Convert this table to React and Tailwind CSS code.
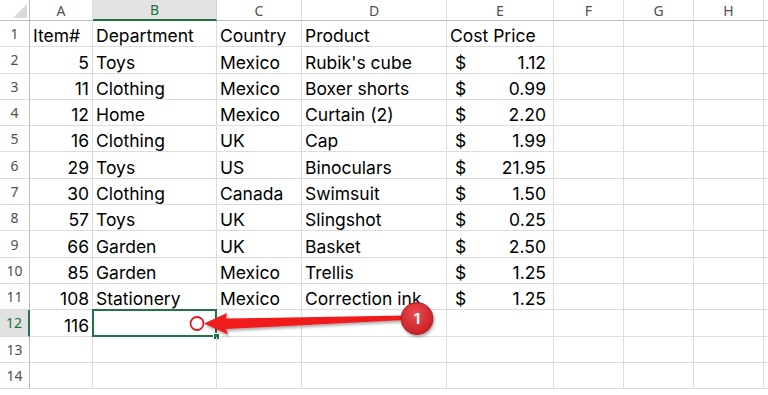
import React from 'react'

const cols = ['A', 'B', 'C', 'D', 'E', 'F', 'G', 'H']

const rows = [
  ['Item#', 'Department', 'Country', 'Product', 'Cost Price'],
  [5, 'Toys', 'Mexico', "Rubik's cube", '1.12'],
  [11, 'Clothing', 'Mexico', 'Boxer shorts', '0.99'],
  [12, 'Home', 'Mexico', 'Curtain (2)', '2.20'],
  [16, 'Clothing', 'UK', 'Cap', '1.99'],
  [29, 'Toys', 'US', 'Binoculars', '21.95'],
  [30, 'Clothing', 'Canada', 'Swimsuit', '1.50'],
  [57, 'Toys', 'UK', 'Slingshot', '0.25'],
  [66, 'Garden', 'UK', 'Basket', '2.50'],
  [85, 'Garden', 'Mexico', 'Trellis', '1.25'],
  [108, 'Stationery', 'Mexico', 'Correction ink', '1.25'],
  [116, '', '', '', ''],
  ['', '', '', '', ''],
  ['', '', '', '', ''],
]

const cell = 'border-r border-b border-[#dcdcdc] flex items-end overflow-visible whitespace-nowrap leading-[20px] text-[17.5px] text-black'

function ColHeader({ name }) {
  const selected = name === 'B'
  return (
    <div className={`flex items-center justify-center text-[14px] border-r ${selected ? 'bg-[#e3e3e3] text-[#1e7145] border-b-2 border-b-[#217346] border-r-[#d0d0d0]' : 'border-b border-b-[#bcbcbc] border-r-[#dcdcdc] text-[#505050]'}`}>
      {name}
    </div>
  )
}

function RowHeader({ n }) {
  const selected = n === 12
  return (
    <div className={`flex items-center justify-center text-[14px] border-b border-b-[#dcdcdc] ${selected ? 'bg-[#e1e1e1] text-[#1e7145] border-r-2 border-r-[#217346]' : 'border-r border-r-[#bcbcbc] text-[#505050]'}`}>
      {n}
    </div>
  )
}

export default function App() {
  return (
    <div className="relative w-[768px] h-[395px] overflow-hidden bg-white" style={{ fontFamily: 'Inter, "Liberation Sans", sans-serif' }}>
      <div
        className="grid grid-cols-[30px_63px_124px_85px_145px_107px_70px_70px_70px_4px] grid-rows-[21px_repeat(14,26.3px)]"
        style={{ fontFamily: '"Noto Sans", "Open Sans", sans-serif' }}
      >
        <div className="relative border-r border-b border-[#bcbcbc]">
          <div className="absolute right-[2px] bottom-[2px] w-0 h-0 border-l-[14px] border-l-transparent border-b-[14px] border-b-[#d9d9d9]" />
        </div>
        {cols.map((c) => <ColHeader key={c} name={c} />)}
        <div className="border-b border-[#bcbcbc]" />

        {rows.map((r, i) => {
          const n = i + 1
          return (
            <React.Fragment key={`row-${n}`}>
              <RowHeader n={n} />
              <div className={`${cell} ${n === 1 ? 'justify-start pl-[3px]' : 'justify-end pr-[3px]'}`} style={{ fontFamily: 'Inter, sans-serif' }}>{r[0]}</div>
              <div className={`${cell} pl-[3px] relative`} style={{ fontFamily: 'Inter, sans-serif' }}>
                {r[1]}
                {n === 12 ?
                  <div className="absolute -left-px -top-px right-[-1px] bottom-[-1px] border-2 border-[#217346]">
                    <div className="absolute right-[-5px] bottom-[-5px] w-[7px] h-[7px] bg-[#217346] border border-white" />
                  </div>
                : false}
              </div>
              <div className={`${cell} pl-[3px]`} style={{ fontFamily: 'Inter, sans-serif' }}>{r[2]}</div>
              <div className={`${cell} pl-[3px]`} style={{ fontFamily: 'Inter, sans-serif' }}>{r[3]}</div>
              {n === 1 ?
                <div className={`${cell} pl-[3px]`} style={{ fontFamily: 'Inter, sans-serif' }}>{r[4]}</div>
              :
                <div className={`${cell} justify-between pl-[8px] pr-[7px]`} style={{ fontFamily: 'Inter, sans-serif' }}>
                  {r[4] ? <><span>$</span><span>{r[4]}</span></> : false}
                </div>
              }
              <div className={cell} />
              <div className={cell} />
              <div className={cell} />
              <div className="border-b border-[#dcdcdc]" />
            </React.Fragment>
          )
        })}
      </div>

      <svg className="absolute left-0 top-0 pointer-events-none" width="768" height="395" viewBox="0 0 768 395">
        <defs>
          <radialGradient id="badge" cx="45%" cy="35%" r="70%">
            <stop offset="0%" stopColor="#ea4a4f" />
            <stop offset="100%" stopColor="#c41e24" />
          </radialGradient>
          <filter id="shadow" x="-50%" y="-50%" width="200%" height="200%">
            <feDropShadow dx="1" dy="2" stdDeviation="1.5" floodColor="#000" floodOpacity="0.35" />
          </filter>
        </defs>
        <circle cx="197" cy="323.5" r="6.5" fill="none" stroke="#e5171c" strokeWidth="1.8" />
        <polygon
          points="204,323.5 227,313 226,318.5 405,315.5 405,320 226,329 228,334.5"
          fill="#f01a1f"
          filter="url(#shadow)"
        />
        <g filter="url(#shadow)">
          <circle cx="417" cy="318.5" r="16" fill="url(#badge)" stroke="#a8161b" strokeWidth="0.8" />
        </g>
        <text x="417" y="324" textAnchor="middle" fill="#fff" fontSize="15" fontWeight="700" fontFamily="Inter, sans-serif">1</text>
      </svg>
    </div>
  )
}
